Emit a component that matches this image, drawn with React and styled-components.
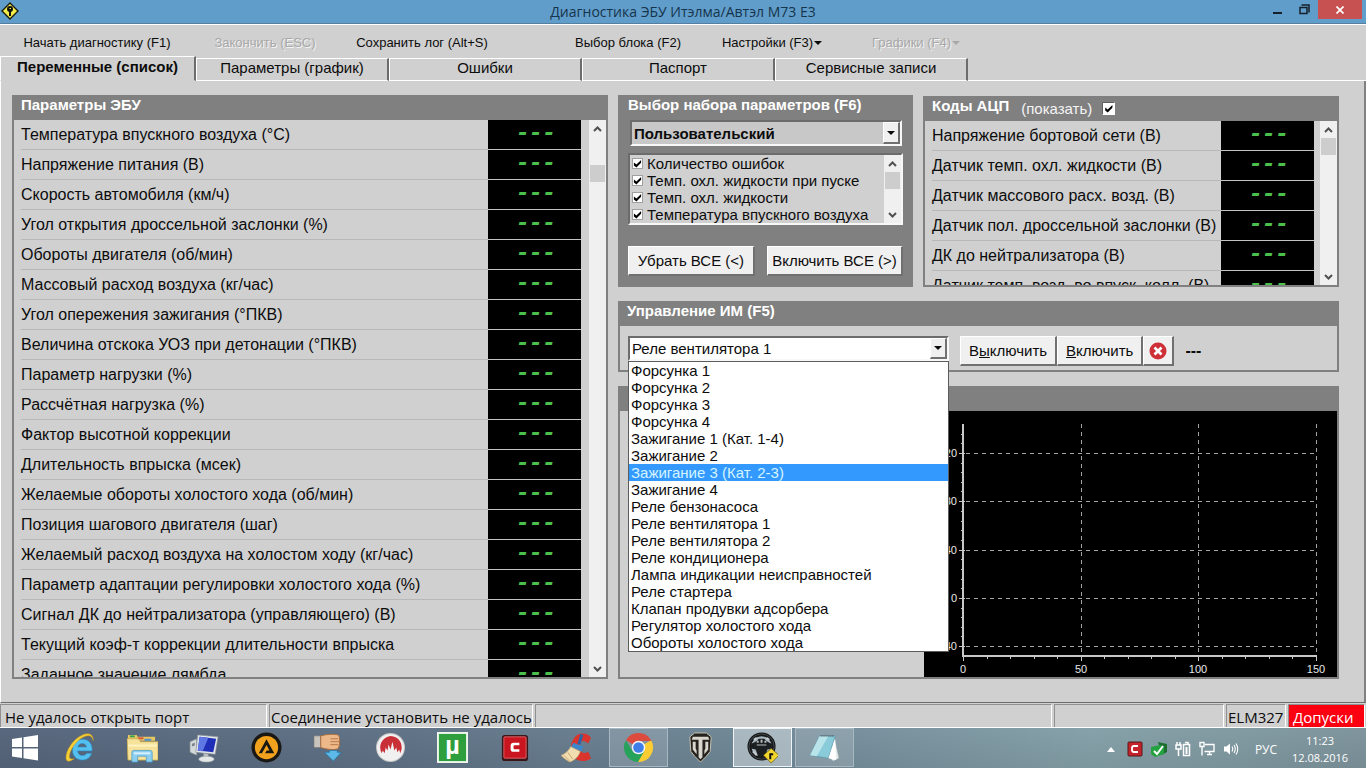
import React, { useState } from "react";
import styled, { createGlobalStyle, css } from "styled-components";

const parameters = [
  "Температура впускного воздуха (°C)",
  "Напряжение питания (В)",
  "Скорость автомобиля (км/ч)",
  "Угол открытия дроссельной заслонки (%)",
  "Обороты двигателя (об/мин)",
  "Массовый расход воздуха (кг/час)",
  "Угол опережения зажигания (°ПКВ)",
  "Величина отскока УОЗ при детонации (°ПКВ)",
  "Параметр нагрузки (%)",
  "Рассчётная нагрузка (%)",
  "Фактор высотной коррекции",
  "Длительность впрыска (мсек)",
  "Желаемые обороты холостого хода (об/мин)",
  "Позиция шагового двигателя (шаг)",
  "Желаемый расход воздуха на холостом ходу (кг/час)",
  "Параметр адаптации регулировки холостого хода (%)",
  "Сигнал ДК до нейтрализатора (управляющего) (В)",
  "Текущий коэф-т коррекции длительности впрыска",
  "Заданное значение лямбда",
];

const adcCodes = [
  "Напряжение бортовой сети (В)",
  "Датчик темп. охл. жидкости (В)",
  "Датчик массового расх. возд. (В)",
  "Датчик пол. дроссельной заслонки (В)",
  "ДК до нейтрализатора (В)",
  "Датчик темп. возд. во впуск. колл. (В)",
];

const paramSet = [
  "Количество ошибок",
  "Темп. охл. жидкости при пуске",
  "Темп. охл. жидкости",
  "Температура впускного воздуха",
];

const actuators = [
  "Форсунка 1",
  "Форсунка 2",
  "Форсунка 3",
  "Форсунка 4",
  "Зажигание 1 (Кат. 1-4)",
  "Зажигание 2",
  "Зажигание 3 (Кат. 2-3)",
  "Зажигание 4",
  "Реле бензонасоса",
  "Реле вентилятора 1",
  "Реле вентилятора 2",
  "Реле кондиционера",
  "Лампа индикации неисправностей",
  "Реле стартера",
  "Клапан продувки адсорбера",
  "Регулятор холостого хода",
  "Обороты холостого хода",
];

const tabs = [
  "Переменные (список)",
  "Параметры (график)",
  "Ошибки",
  "Паспорт",
  "Сервисные записи",
];

const GlobalStyle = createGlobalStyle`
  * {
    box-sizing: border-box;
  }
  body {
    margin: 0;
    background: #d0d0d0;
    font-family: "Liberation Sans", Arial, sans-serif;
    font-size: 16px;
    color: #0c0c0c;
  }
  button, select, input {
    font: inherit;
    color: inherit;
    margin: 0;
  }
`;

function Chevron({ up }) {
  return (
    <svg width="9" height="6" viewBox="0 0 9 6" aria-hidden="true">
      <path
        d={up ? "M1 5 4.500 1.500 8 5" : "M1 1 4.500 4.500 8 1"}
        fill="none"
        stroke="#505050"
        strokeWidth="2"
      />
    </svg>
  );
}

function ScrollBar({ offset }) {
  return (
    <Track>
      <TrackButton aria-label="Вверх">
        <Chevron up />
      </TrackButton>
      <Thumb $offset={offset} />
      <TrackButton aria-label="Вниз">
        <Chevron />
      </TrackButton>
    </Track>
  );
}

function Readings({ rows, offset, gap }) {
  return (
    <ReadingsBox $gap={gap}>
      <TableClip>
        <Table>
          <tbody>
            {rows.map((name) => (
              <tr key={name}>
                <NameCell scope="row">{name}</NameCell>
                <ValueCell>---</ValueCell>
              </tr>
            ))}
          </tbody>
        </Table>
      </TableClip>
      <ScrollBar offset={offset} />
    </ReadingsBox>
  );
}

function Chart() {
  const gridY = [42, 90, 139, 187, 235];
  const labelsY = ["120", "80", "40", "0", "-40"];
  const gridX = [39, 157, 274, 392];
  const minorX = [63, 86, 110, 133, 180, 204, 227, 251, 298, 321, 345, 368];
  const minorY = [23, 32, 52, 61, 71, 80, 100, 110, 119, 129, 148, 158, 168, 177, 197, 206, 216, 225];
  return (
    <ChartSvg viewBox="0 0 413 266" preserveAspectRatio="xMinYMin meet" role="img" aria-label="График">
      <g stroke="#a4a4a4" strokeDasharray="4 4" shapeRendering="crispEdges">
        {gridY.map((y) => (
          <line key={y} x1="42" x2="392" y1={y + 0.5} y2={y + 0.5} />
        ))}
        {gridX.slice(1).map((x) => (
          <line key={x} x1={x + 0.5} x2={x + 0.5} y1="13" y2="244" />
        ))}
      </g>
      <g stroke="#c8c8c8" shapeRendering="crispEdges">
        <path d="M39 13V245H393" fill="none" strokeWidth="2" />
        {gridY.map((y) => (
          <line key={y} x1="35" x2="41" y1={y + 0.5} y2={y + 0.5} />
        ))}
        {minorY.map((y) => (
          <line key={y} x1="37" x2="39" y1={y + 0.5} y2={y + 0.5} />
        ))}
        {gridX.map((x) => (
          <line key={x} x1={x + 0.5} x2={x + 0.5} y1="245" y2="250" />
        ))}
        {minorX.map((x) => (
          <line key={x} x1={x + 0.5} x2={x + 0.5} y1="245" y2="248" />
        ))}
      </g>
      <g fill="#e8e8e8" fontSize="11">
        {labelsY.map((text, i) => (
          <text key={text} x="33" y={gridY[i] + 4} textAnchor="end">
            {text}
          </text>
        ))}
        {gridX.map((x, i) => (
          <text key={x} x={x} y="262" textAnchor="middle">
            {i * 50}
          </text>
        ))}
      </g>
    </ChartSvg>
  );
}

function AppIcon() {
  return (
    <svg width="18" height="18" viewBox="0 0 18 18" aria-hidden="true">
      <path d="M9 1 17 9 9 17 1 9z" fill="#f4ee4c" stroke="#1c1c10" strokeWidth="1.400" />
      <circle cx="9" cy="7" r="3" fill="#111" />
      <path d="M8 9h2v5H8z" fill="#111" />
      <path d="M8.500 6h1.500v1H8.500z" fill="#f4ee4c" />
    </svg>
  );
}

const icons = {
  ie: (
    <>
      <path
        d="M28 19.500H13c.3 3.200 2.300 4.800 5 4.800 2.200 0 3.600-.9 4.300-2.300h5.200c-1.300 4.400-4.900 7-9.500 7-6 0-10.300-4-10.300-10.300S12 7.500 18 7.500c6.500 0 10.400 4.500 10 12zM13.200 15.500h9c-.3-2.400-2-3.700-4.400-3.700s-4.100 1.300-4.600 3.700z"
        fill="#54c0f0"
        stroke="#2b8cc8"
        strokeWidth=".6"
      />
      <path
        d="M29 9c.8-6-4-9-11-6C9 6.500 .5 19 1 27c.3 4 4 4 8.500.5C6 28.500 4.300 27.500 4.500 25 5 18 12 8.500 19.500 5c5-2.300 9-1.500 9.500 4z"
        fill="#f5cf36"
        stroke="#c99a18"
        strokeWidth=".5"
      />
    </>
  ),
  explorer: (
    <>
      <path d="M1 6V3h9l1 2h18v4H1z" fill="#e6c661" />
      <path d="M3 3.500h5v2H3z" fill="#3aa052" />
      <path d="M11 5.500h6v2h-6z" fill="#d8553b" />
      <path d="M18 7h7v2h-7z" fill="#4a8fd0" />
      <path d="M0 7h12l2 3h18v19H1z" fill="#f6e29a" stroke="#c9a94a" strokeWidth=".8" />
      <path d="M1 13h30v2H1z" fill="#fff3c2" />
      <path d="M5 31V21q0-2 2-2h17q2 0 2 2v10h-6v-6h-9v6z" fill="#8ccdf0" stroke="#4a9cca" strokeWidth=".8" />
      <path d="M7 21h17v2H7z" fill="#d8f1ff" />
    </>
  ),
  computer: (
    <>
      <path d="M1 10 8 7v17l-7-3z" fill="#d4d9dc" stroke="#838b90" strokeWidth=".7" />
      <path d="M3 12l3-1v3l-3 1z" fill="#7a848a" />
      <path d="M9 3l21 2-3 18-20-2z" fill="#e4e8ea" stroke="#8a9296" strokeWidth=".7" />
      <path d="M11 5l17 2-3 14-16-2z" fill="#1f2fb8" />
      <path d="M11 5l9 1-6 14-5-1z" fill="#5d77e4" />
      <path d="M15 22l5 1v4h-5z" fill="#b8bec2" />
      <ellipse cx="18" cy="28" rx="8" ry="3" fill="#e4e7e8" stroke="#9aa1a5" strokeWidth=".6" />
    </>
  ),
  aimp: (
    <>
      <circle cx="16" cy="16" r="15.500" fill="#1a1814" />
      <circle cx="16" cy="16" r="12" fill="#f3a21d" />
      <path
        d="M16 7.500 24 22H14.500l1.700-3h2.800L16 13.500 11.300 22H8z"
        fill="#1a1814"
      />
    </>
  ),
  download: (
    <>
      <path d="M1 4h7v12H1z" fill="#c8c3bd" stroke="#827c76" strokeWidth=".7" />
      <path d="M8 4c6-2 14-2 18-1 2 1 2 11 0 14-3 2-12 1-18-1z" fill="#eeb98a" stroke="#a56c3e" strokeWidth="1" />
      <path d="M18 7h8M18 10h9M18 13h8" stroke="#b87747" strokeWidth="1" />
      <path d="M17 19h8v2h4l-8 9-9-9h5z" fill="#5db9e8" stroke="#277ba8" strokeWidth=".8" />
    </>
  ),
  burn: (
    <>
      <circle cx="16" cy="16" r="15" fill="#c4c4c4" />
      <circle cx="16" cy="16" r="14" fill="#f0f0f0" />
      <path
        d="M16 4a12 12 0 0 1 10 18l-1-4-2 3-1-5-2 3-2-9-2 8-2-5-1 6-2-3-1 6-2-3-1 3A12 12 0 0 1 16 4z"
        fill="#c92f37"
      />
    </>
  ),
  utorrent: (
    <>
      <path d="M0 0h32v32H0z" fill="#eef6ec" />
      <path d="M2 2h28v28H2z" fill="#2f9e3c" />
      <text x="16" y="23" textAnchor="middle" fontSize="26" fontWeight="700" fill="#fff">
        µ
      </text>
    </>
  ),
  comodo: (
    <>
      <rect x="3" y="3" width="27" height="27" rx="3" fill="#3c1517" />
      <rect x="5" y="5" width="23" height="22" rx="1" fill="#c9151f" stroke="#e97a7e" strokeWidth=".8" />
      <path d="M21 11h-6q-3 0-3 3v3.500q0 3 3 3h6v-2.700h-5q-1 0-1-1v-2q0-1 1-1h5z" fill="#fff" />
    </>
  ),
  ccleaner: (
    <>
      <path
        d="M31 6c-4-6-14-6-18 1-5 8-3 18 4 22 5 2 10 1 14-2l-3-7c-5 4-9 0-9-5 0-6 5-8 9-3z"
        fill="#d9352d"
      />
      <path d="M20 2l3 1-3 10-3-1z" fill="#2b64a8" />
      <path d="M13 11l10 4-2 5-11-4z" fill="#3d87cc" />
      <path d="M10 15l10 5c-2 6-6 9-11 11-2-1-8-5-9-7 4-1 8-5 10-9z" fill="#f1ddb0" stroke="#b99b62" strokeWidth=".6" />
      <path d="M3 24l6 6M7 21l5 7" stroke="#c8a972" strokeWidth="1" />
    </>
  ),
  chrome: (
    <>
      <path d="M16 16 3 8.500A15 15 0 0 1 29 8.500L29 9H16z" fill="#dd4b3e" />
      <path d="M16 16 29 8.500A15 15 0 0 1 16 31l-.5-.5L22 19z" fill="#fccd33" />
      <path d="M16 16 22 19.500 15.500 31A15 15 0 0 1 3 8.500L10 20z" fill="#27a25a" />
      <path d="M16 9h13.300L28.500 8H15z" fill="#dd4b3e" />
      <circle cx="16" cy="16" r="7" fill="#f6f8f8" />
      <circle cx="16" cy="16" r="5.500" fill="#3f7ee8" />
    </>
  ),
  tanks: (
    <>
      <path d="M10 1h12l5 4-1 15-4 5-6 6-6-6-4-5L5 5z" fill="#25231f" stroke="#c9c3b2" strokeWidth="1" />
      <path d="M8 5h16l1 3h-7v18l-2 2-2-2V8H7z" fill="#d9d6cd" />
      <path d="M8 10v8l4 5v-4l-1-2v-7zM24 10v8l-4 5v-4l1-2v-7z" fill="#d9d6cd" />
    </>
  ),
  wheel: (
    <>
      <circle cx="15" cy="15" r="12.500" fill="none" stroke="#17191b" strokeWidth="4" />
      <circle cx="15" cy="15" r="13" fill="none" stroke="#63686b" strokeWidth=".6" />
      <path d="M4 12c4-1 7-3 8-5h6c1 2 4 4 8 5v5l-5 1-3 9h-6L9 18l-5-1z" fill="#1c1f21" />
      <path d="M10 9h2v2h-2zM14 8h2v3h-2zM18 9h2v2h-2zM10 13h10v1H10z" fill="#b9bec0" />
      <path d="M6 20l4 4M24 20l-4 4M7 8l3-2M23 8l-3-2" stroke="#c7cccf" strokeWidth="2" />
      <path d="M25 17l8 7-8 8-8-8z" fill="#f3d62c" stroke="#6b5a10" strokeWidth=".8" />
      <path d="M24 28v-5h3" stroke="#111" strokeWidth="2" fill="none" />
    </>
  ),
  notes: (
    <>
      <path d="M26 5l5 22-6 3-5-4z" fill="#e6ecec" stroke="#94a6a8" strokeWidth=".6" />
      <path d="M11 4h16L20 27 1 24z" fill="#8acbd9" stroke="#4f96a8" strokeWidth=".6" />
      <path d="M11 4h9L8 25l-7-1z" fill="#b9e4ea" />
      <path d="M12 4h14" stroke="#5b676b" strokeWidth="2" strokeDasharray="1 1" />
      <path d="M20 27l7-20 1 22z" fill="#fff" />
    </>
  ),
};

const pinned = [
  ["ie", "Internet Explorer"],
  ["explorer", "Проводник"],
  ["computer", "Компьютер"],
  ["aimp", "AIMP"],
  ["download", "Загрузки"],
  ["burn", "Запись дисков"],
  ["utorrent", "µTorrent"],
  ["comodo", "Comodo"],
  ["ccleaner", "CCleaner"],
  ["chrome", "Chrome", "open"],
  ["tanks", "World of Tanks"],
  ["wheel", "Диагностика", "active"],
  ["notes", "Блокнот", "open"],
];

function Taskbar() {
  return (
    <Bar>
      <StartButton aria-label="Пуск">
        <svg width="28" height="26" viewBox="0 0 28 26" aria-hidden="true">
          <path d="M1 4 11 2.500V12H1zM12.500 2.300 27 0v12H12.500zM1 13.500h10V23L1 21.600zM12.500 13.500H27V25.500L12.500 23.300z" fill="#fff" />
        </svg>
      </StartButton>
      {pinned.map(([id, label, state]) => (
        <TaskCell key={id}>
          <TaskButton aria-label={label} $state={state}>
            <svg width="31" height="31" viewBox="0 0 32 32" aria-hidden="true">
              {icons[id]}
            </svg>
          </TaskButton>
        </TaskCell>
      ))}
      <Tray>
        <TrayButton aria-label="Скрытые значки">
          <svg width="8" height="5" viewBox="0 0 8 5">
            <path d="M0 5 4 0 8 5z" fill="#fff" />
          </svg>
        </TrayButton>
        <TrayButton aria-label="Comodo">
          <svg width="16" height="16" viewBox="0 0 16 16">
            <rect x="1" y="1" width="14" height="14" rx="1" fill="#c5232b" stroke="#57181b" />
            <path d="M11 5H7Q5 5 5 7v2q0 2 2 2h4" fill="none" stroke="#fff" strokeWidth="1.800" />
          </svg>
        </TrayButton>
        <TrayButton aria-label="Безопасное извлечение">
          <svg width="16" height="16" viewBox="0 0 16 16">
            <path d="M7 1 16 3v8l-5 3z" fill="#1c6f31" />
            <path d="M0 6 9 4l4 2v7l-9 3-4-3z" fill="#23a33f" />
            <path d="M3 10l3 3 6-8" fill="none" stroke="#fff" strokeWidth="2" />
          </svg>
        </TrayButton>
        <TrayButton aria-label="Батарея">
          <svg width="16" height="16" viewBox="0 0 16 16">
            <path d="M8.500 3.500h6v11h-6zM10 1.500h3v2" fill="none" stroke="#fff" strokeWidth="1.500" />
            <path d="M10.500 6h2v7h-2z" fill="#fff" />
            <path d="M2 1v3M5 1v3M1 4h5v4H1zM3.500 8v7" fill="none" stroke="#fff" strokeWidth="1.500" />
          </svg>
        </TrayButton>
        <TrayButton aria-label="Сеть">
          <svg width="16" height="16" viewBox="0 0 16 16">
            <path d="M6 3.500h9v7H5.500M8 13.500h5M10.500 10.500v3" fill="none" stroke="#fff" strokeWidth="1.400" />
            <path d="M1 1.500h4v4H1zM3 5.500v9" fill="none" stroke="#fff" strokeWidth="1.400" />
          </svg>
        </TrayButton>
        <TrayButton aria-label="Громкость">
          <svg width="16" height="16" viewBox="0 0 16 16">
            <path d="M1 5.500h2.500L7 2.500v11l-3.500-3H1z" fill="#fff" />
            <path d="M9 5.500q1.500 2.500 0 5M11 4q2.500 4 0 8M13 2.500q3.500 5.500 0 11" fill="none" stroke="#fff" strokeWidth="1.100" />
          </svg>
        </TrayButton>
        <Lang>РУС</Lang>
        <Clock>
          <span>11:23</span>
          <span>12.08.2016</span>
        </Clock>
      </Tray>
    </Bar>
  );
}

function App() {
  const [actuator, setActuator] = useState("Реле вентилятора 1");
  const hovered = "Зажигание 3 (Кат. 2-3)";

  return (
    <Window>
      <GlobalStyle />
      <TitleBar>
        <TitleIcon>
          <AppIcon />
        </TitleIcon>
        <Title>Диагностика ЭБУ Итэлма/Автэл М73 E3</Title>
        <Controls>
          <ControlButton aria-label="Свернуть">
            <svg width="9" height="12" viewBox="0 0 9 12">
              <path d="M0 9h9" stroke="#16202a" strokeWidth="2" />
            </svg>
          </ControlButton>
          <ControlButton aria-label="Развернуть">
            <svg width="11" height="11" viewBox="0 0 11 11">
              <path d="M1 3.500h7v6H1zM2.500 1h7.500v7.500" fill="none" stroke="#16202a" strokeWidth="1.500" />
            </svg>
          </ControlButton>
          <ControlButton aria-label="Закрыть" $close>
            <svg width="8" height="8" viewBox="0 0 8 8">
              <path d="M.5.5 7.500 7.500M7.500.5.5 7.500" stroke="#fff" strokeWidth="1.700" />
            </svg>
          </ControlButton>
        </Controls>
      </TitleBar>

      <Menu>
        <MenuButton $width={194}>Начать диагностику (F1)</MenuButton>
        <MenuButton $width={142} disabled>
          Закончить (ESC)
        </MenuButton>
        <MenuButton $width={172}>Сохранить лог (Alt+S)</MenuButton>
        <MenuSpacer />
        <MenuButton $width={132}>Выбор блока (F2)</MenuButton>
        <MenuButton $width={156}>
          Настройки (F3)
          <Caret />
        </MenuButton>
        <MenuButton $width={132} disabled>
          Графики (F4)
          <Caret />
        </MenuButton>
      </Menu>

      <Tabs role="tablist">
        {tabs.map((name, i) => (
          <Tab key={name} role="tab" aria-selected={i === 0} $active={i === 0}>
            {name}
          </Tab>
        ))}
        <TabsRest />
      </Tabs>

      <Page>
        <Panel>
          <PanelHeader>
            <PanelTitle>Параметры ЭБУ</PanelTitle>
          </PanelHeader>
          <Readings rows={parameters} offset={28} gap={8} />
        </Panel>

        <Column>
          <TopRow>
            <SetPanel>
              <PanelTitle>Выбор набора параметров (F6)</PanelTitle>
              <SelectBox $grey>
                <Select aria-label="Набор параметров" defaultValue="user">
                  <option value="user">Пользовательский</option>
                </Select>
                <SelectArrow aria-hidden="true">
                  <Caret />
                </SelectArrow>
              </SelectBox>
              <CheckList>
                <CheckItems>
                  {paramSet.map((name) => (
                    <CheckLabel key={name}>
                      <Checkbox type="checkbox" defaultChecked />
                      {name}
                    </CheckLabel>
                  ))}
                </CheckItems>
                <ScrollBar offset={0} />
              </CheckList>
              <SetButtons>
                <Button>Убрать ВСЕ (&lt;)</Button>
                <Button>Включить ВСЕ (&gt;)</Button>
              </SetButtons>
            </SetPanel>

            <AdcPanel>
              <PanelHeader>
                <PanelTitle>Коды АЦП</PanelTitle>
                <ShowLabel>
                  (показать)
                  <Checkbox type="checkbox" defaultChecked />
                </ShowLabel>
              </PanelHeader>
              <Readings rows={adcCodes} offset={0} gap={6} />
            </AdcPanel>
          </TopRow>

          <ControlPanel>
            <PanelHeader>
              <PanelTitle>Управление ИМ (F5)</PanelTitle>
            </PanelHeader>
            <ControlRow>
              <Combo>
                <SelectBox>
                  <Select
                    aria-label="Исполнительный механизм"
                    value={actuator}
                    onChange={(e) => setActuator(e.target.value)}
                  >
                    {actuators.map((name) => (
                      <option key={name}>{name}</option>
                    ))}
                  </Select>
                  <SelectArrow aria-hidden="true">
                    <Caret />
                  </SelectArrow>
                </SelectBox>
                <DropDown role="listbox" aria-label="Список механизмов">
                  {actuators.map((name) => (
                    <DropItem
                      key={name}
                      role="option"
                      aria-selected={name === hovered}
                      $active={name === hovered}
                      onClick={() => setActuator(name)}
                    >
                      {name}
                    </DropItem>
                  ))}
                </DropDown>
              </Combo>
              <ButtonGroup>
                <Button>
                  В<u>ы</u>ключить
                </Button>
                <Button>
                  <u>В</u>ключить
                </Button>
                <Button aria-label="Сброс" $icon>
                  <svg width="18" height="18" viewBox="0 0 18 18" aria-hidden="true">
                    <circle cx="9" cy="9" r="8.500" fill="#cf2f36" />
                    <path d="M5.500 5.500l7 7M12.500 5.500l-7 7" stroke="#fff" strokeWidth="2.800" />
                  </svg>
                </Button>
              </ButtonGroup>
              <State>---</State>
            </ControlRow>
          </ControlPanel>

          <Panel>
            <PanelHeader />
            <ChartRow>
              <ChartArea>
                <Chart />
              </ChartArea>
            </ChartRow>
          </Panel>
        </Column>
      </Page>

      <StatusBar>
        <StatusCell $width={267}>Не удалось открыть порт</StatusCell>
        <StatusCell $width={264}>Соединение установить не удалось</StatusCell>
        <StatusCell />
        <StatusCell $width={170} />
        <StatusCell $width={60}>ELM327</StatusCell>
        <StatusCell $width={77} $alert>
          Допуски
        </StatusCell>
      </StatusBar>
      <Taskbar />
    </Window>
  );
}

const sunken = css`
  border: 2px solid;
  border-color: #6c6c6c #f8f8f8 #f8f8f8 #6c6c6c;
`;

const raised = css`
  border: 2px solid;
  border-color: #ffffff #707070 #707070 #ffffff;
`;

const Window = styled.div`
  display: flex;
  flex-direction: column;
  height: 100vh;
  overflow: hidden;
`;

const TitleBar = styled.header`
  display: grid;
  grid-template-columns: 1fr auto 1fr;
  height: 24px;
  flex: none;
  background: #609dca;
  border-bottom: 1px solid #567f9f;
`;

const TitleIcon = styled.span`
  padding: 2px 1px;
`;

const Title = styled.h1`
  margin: 0;
  font: 400 14px/23px "Open Sans", "Noto Sans", sans-serif;
  color: #16344c;
`;

const Controls = styled.div`
  display: flex;
  justify-content: flex-end;
  padding-right: 4px;
`;

const ControlButton = styled.button`
  display: flex;
  align-items: center;
  justify-content: center;
  width: ${(p) => (p.$close ? 44 : 27)}px;
  height: 19px;
  padding: 0;
  border: 0;
  background: ${(p) => (p.$close ? "#c75050" : "none")};
`;

const Menu = styled.nav`
  display: flex;
  flex: none;
  height: 32px;
  border-top: 1px solid #fff;
`;

const MenuButton = styled.button`
  display: flex;
  align-items: center;
  justify-content: center;
  gap: 1px;
  width: ${(p) => p.$width}px;
  padding: 4px 0 0;
  border: 0;
  background: none;
  font-size: 13px;
  white-space: nowrap;
  &:disabled {
    color: #a8a8a8;
    text-shadow: 1px 1px 0 #f4f4f4;
  }
`;

const MenuSpacer = styled.span`
  width: 54px;
`;

const Caret = styled.span`
  border: 4px solid transparent;
  border-top-color: currentColor;
  border-bottom: 0;
`;

const Tabs = styled.div`
  display: flex;
  flex: none;
  height: 25px;
`;

const Tab = styled.button`
  flex: none;
  width: ${(p) => (p.$active ? 196 : 193)}px;
  padding: 0 0 4px;
  margin-top: ${(p) => (p.$active ? 0 : 2)}px;
  background: none;
  border: solid;
  border-width: 1px 2px 1px 1px;
  border-color: #fff #6c6c6c ${(p) => (p.$active ? "transparent" : "#fff")} #fff;
  font-size: 15px;
  font-weight: ${(p) => (p.$active ? 700 : 400)};
  line-height: 18px;
`;

const TabsRest = styled.div`
  flex: 1;
  border-bottom: 1px solid #fff;
`;

const Page = styled.main`
  display: grid;
  grid-template-columns: 596fr 721fr;
  grid-template-rows: minmax(0, 1fr);
  gap: 10px;
  flex: 1;
  min-height: 0;
  padding: 14px 25px 23px 11px;
  border: solid;
  border-width: 0 2px 1px 1px;
  border-color: #fff #808080 #6c6c6c #fff;
`;

const Panel = styled.section`
  display: flex;
  flex-direction: column;
  min-width: 0;
  min-height: 0;
  background: #d0d0d0;
  border: 2px solid #808080;
  border-top: 0;
`;

const PanelHeader = styled.div`
  display: flex;
  flex: none;
  gap: 12px;
  height: 25px;
  padding-left: 7px;
  background: #808080;
`;

const PanelTitle = styled.h2`
  margin: 0;
  font-size: 15px;
  line-height: 20px;
  color: #fff;
  white-space: nowrap;
`;

const Column = styled.div`
  display: grid;
  grid-template-rows: 192px 71px minmax(0, 1fr);
  row-gap: 14px;
  min-width: 0;
`;

const TopRow = styled.div`
  display: grid;
  grid-template-columns: 295fr 416fr;
  grid-template-rows: minmax(0, 1fr);
  gap: 10px;
`;

const SetPanel = styled.section`
  display: flex;
  flex-direction: column;
  min-width: 0;
  padding: 0 10px;
  background: #808080;
`;

const AdcPanel = styled(Panel)`
  margin-top: 1px;
`;

const ReadingsBox = styled.div`
  display: flex;
  gap: ${(p) => p.$gap}px;
  flex: 1;
  min-height: 0;
`;

const TableClip = styled.div`
  flex: 1;
  min-width: 0;
  overflow: hidden;
  padding-left: 7px;
`;

const Table = styled.table`
  width: 100%;
  border-spacing: 0;
  table-layout: fixed;
`;

const NameCell = styled.th`
  height: 30px;
  padding: 0;
  border-bottom: 1px solid #b8b8b8;
  font-weight: 400;
  text-align: left;
  white-space: nowrap;
`;

const ValueCell = styled.td`
  width: 93px;
  height: 30px;
  padding: 0 0 4px 3px;
  background: #000;
  border-bottom: 1px solid #c4c4c4;
  color: #4cc04c;
  font: italic 700 22px/24px "DejaVu Sans Mono", monospace;
  text-align: center;
`;

const Track = styled.div`
  display: flex;
  flex-direction: column;
  flex: none;
  width: 17px;
  background: #f0f0f0;
`;

const TrackButton = styled.button`
  display: flex;
  align-items: center;
  justify-content: center;
  flex: none;
  height: 17px;
  padding: 0;
  border: 0;
  background: none;
`;

const Thumb = styled.span`
  height: 17px;
  margin: ${(p) => p.$offset}px 1px auto;
  background: #cdcdcd;
`;

const SelectBox = styled.div`
  display: flex;
  height: 25px;
  background: #fff;
  ${sunken}
  ${(p) =>
    p.$grey &&
    css`
      height: 26px;
      margin: 5px 1px 0 2px;
      background: #c8c8c8;
      font-weight: 700;
    `}
`;

const Select = styled.select`
  flex: 1;
  min-width: 0;
  appearance: none;
  padding: 0 2px;
  border: 0;
  background: none;
  font-size: 15px;
`;

const SelectArrow = styled.span`
  display: flex;
  align-items: center;
  justify-content: center;
  width: 17px;
  background: #f0f0f0;
  ${raised}
  border-width: 1px 2px 2px 1px;
`;

const CheckList = styled.div`
  display: flex;
  height: 72px;
  margin-top: 7px;
  background: #d0d0d0;
  ${sunken}
`;

const CheckItems = styled.div`
  flex: 1;
  min-width: 0;
  overflow: hidden;
`;

const CheckLabel = styled.label`
  display: flex;
  align-items: center;
  gap: 4px;
  height: 17px;
  padding-left: 2px;
  font-size: 15px;
  white-space: nowrap;
`;

const Checkbox = styled.input`
  appearance: none;
  flex: none;
  width: 11px;
  height: 11px;
  background: #fff;
  border: 1px solid #a0a0a0;
  &:checked::before {
    content: "";
    display: block;
    width: 9px;
    height: 9px;
    background: #000;
    clip-path: polygon(10% 40%, 38% 62%, 90% 10%, 90% 42%, 38% 95%, 10% 72%);
  }
`;

const ShowLabel = styled.label`
  display: flex;
  align-items: center;
  gap: 10px;
  font-size: 15px;
  color: #f4f4f4;
  ${Checkbox} {
    width: 13px;
    height: 13px;
    border-color: #606060 #fff #fff #606060;
  }
  ${Checkbox}::before {
    margin: 1px;
  }
`;

const Button = styled.button`
  display: flex;
  align-items: center;
  justify-content: center;
  height: 30px;
  padding: 0 ${(p) => (p.$icon ? 5 : 8)}px;
  background: #f0f0f0;
  ${raised}
  border-width: 1px 2px 2px 1px;
  font-size: 15px;
  white-space: nowrap;
`;

const SetButtons = styled.div`
  display: grid;
  grid-template-columns: 127fr 136fr;
  gap: 12px;
  margin-top: 21px;
  ${Button} {
    padding: 0;
  }
`;

const ControlPanel = styled(Panel)`
  z-index: 1;
`;

const ControlRow = styled.div`
  display: flex;
  gap: 11px;
  padding: 10px 8px 0;
`;

const Combo = styled.div`
  position: relative;
  width: 321px;
`;

const DropDown = styled.div`
  position: absolute;
  top: 25px;
  left: 0;
  right: 0;
  background: #fff;
  border: 1px solid #5c5c5c;
`;

const DropItem = styled.div`
  height: 17px;
  padding-left: 2px;
  font-size: 15px;
  line-height: 17px;
  color: ${(p) => (p.$active ? "#d4f4ff" : "inherit")};
  background: ${(p) => (p.$active ? "#3399ff" : "none")};
  cursor: default;
`;

const ButtonGroup = styled.div`
  display: flex;
`;

const State = styled.output`
  font-weight: 700;
  line-height: 30px;
`;

const ChartRow = styled.div`
  display: flex;
  justify-content: flex-end;
  flex: 1;
  min-height: 0;
`;

const ChartArea = styled.div`
  width: calc(100% - 304px);
  background: #000;
  overflow: hidden;
`;

const ChartSvg = styled.svg`
  display: block;
  width: 100%;
`;

const StatusBar = styled.footer`
  display: flex;
  flex: none;
  gap: 2px;
  height: 25px;
  padding: 1px 1px 0 0;
  border-bottom: 1px solid #fff;
  font: 15px/24px "Open Sans", "Noto Sans", sans-serif;
`;

const StatusCell = styled.div`
  ${(p) => (p.$width ? `width: ${p.$width}px;` : "flex: 1;")}
  padding-left: ${(p) => (p.$alert ? 4 : 1)}px;
  overflow: hidden;
  white-space: nowrap;
  background: ${(p) => (p.$alert ? "#fb0010" : "none")};
  color: ${(p) => (p.$alert ? "#fff" : "inherit")};
  border: solid;
  border-width: 1px 1px 0;
  border-color: #909090 #fff #fff #909090;
  &:first-child {
    padding-left: 4px;
  }
`;

const Bar = styled.footer`
  display: flex;
  flex: none;
  height: 40px;
  background: linear-gradient(rgba(255, 255, 255, 0.02), rgba(0, 0, 0, 0.06)),
    linear-gradient(90deg, #56657b, #5f7286 30%, #728b99 58%, #84a0a8 80%, #7d939b);
`;

const StartButton = styled.button`
  width: 50px;
  padding: 0;
  border: 0;
  background: none;
  line-height: 0;
`;

const TaskCell = styled.div`
  width: 62px;
  padding: 0 2px 1px 1px;
`;

const TaskButton = styled.button`
  display: flex;
  align-items: center;
  justify-content: center;
  width: 100%;
  height: 100%;
  padding: 0;
  border: 1px solid transparent;
  background: none;
  ${(p) =>
    p.$state &&
    css`
      border-color: ${p.$state === "active" ? "#f0f4f4" : "#a8b8c0"};
      background: rgba(255, 255, 255, ${p.$state === "active" ? 0.4 : 0.16});
    `}
`;

const Tray = styled.div`
  display: flex;
  align-items: center;
  margin-left: auto;
  padding: 2px 15px 0 0;
  color: #fff;
  font: 12px/17px "Open Sans", "Noto Sans", sans-serif;
`;

const TrayButton = styled.button`
  display: flex;
  align-items: center;
  justify-content: center;
  width: 24px;
  height: 24px;
  padding: 0;
  border: 0;
  background: none;
`;

const Lang = styled.span`
  width: 46px;
  text-align: center;
`;

const Clock = styled.time`
  display: flex;
  flex-direction: column;
  align-items: center;
  width: 62px;
  font-size: 11px;
`;

export default App;
